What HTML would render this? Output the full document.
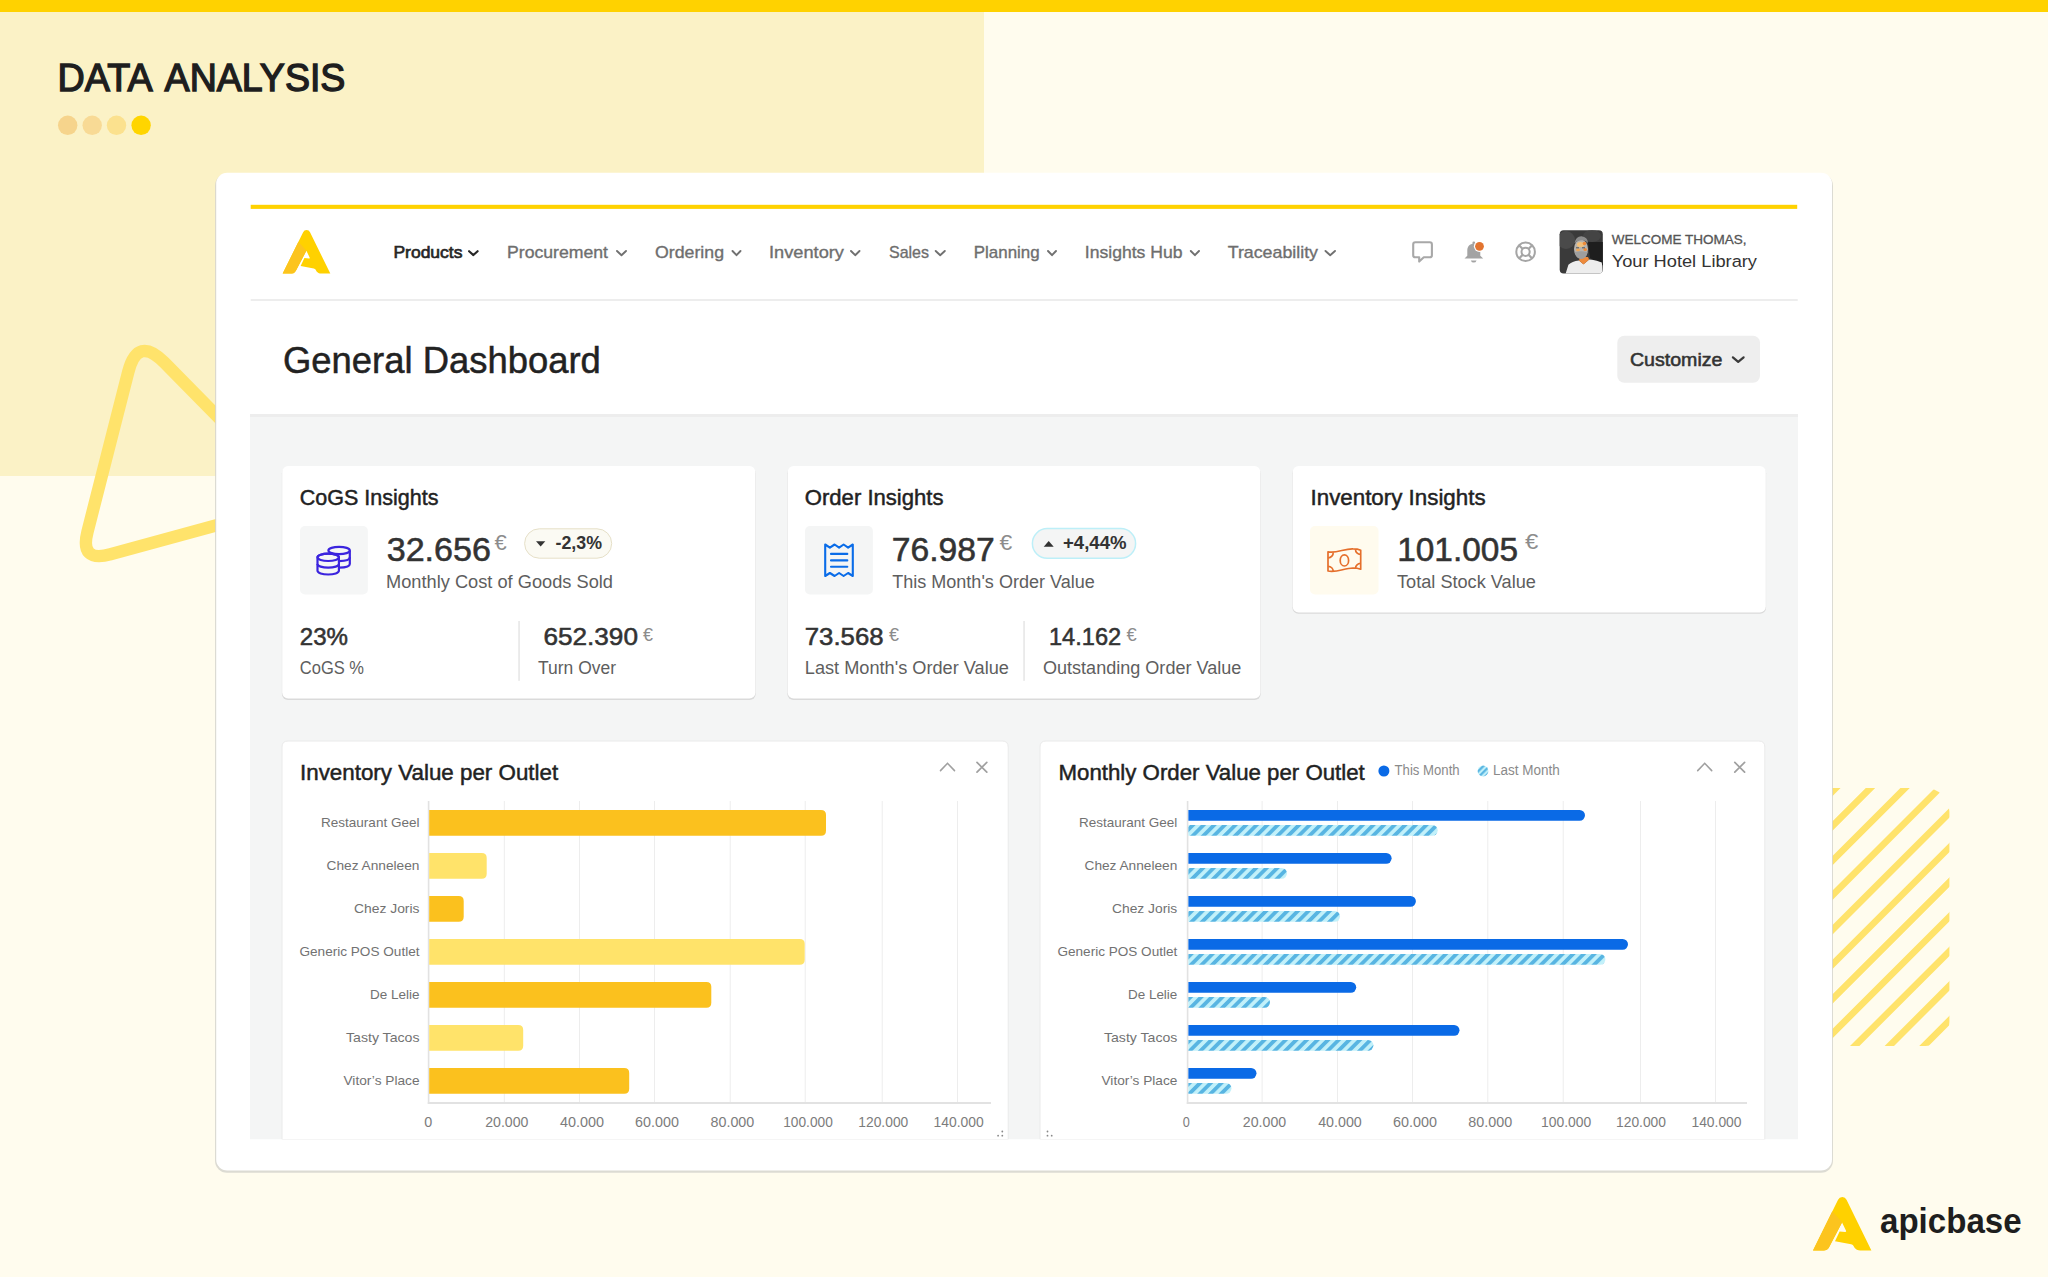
<!DOCTYPE html>
<html><head><meta charset="utf-8"><style>
html,body{margin:0;padding:0;width:2048px;height:1277px;overflow:hidden;background:#FFFCEE}
svg{display:block}
text{font-family:"Liberation Sans",sans-serif}
</style></head><body>
<svg width="2048" height="1277" viewBox="0 0 2048 1277">
<rect x="0" y="0" width="2048" height="1277" fill="#FFFCEE"/>
<rect x="0" y="12" width="984" height="464" fill="#FBF2C6"/>
<rect x="0" y="0" width="2048" height="12" fill="#FFD200"/>
<text x="57.6" y="90.7" font-size="39" fill="#1E1E1E" textLength="95" lengthAdjust="spacingAndGlyphs" stroke="#1E1E1E" stroke-width="1.4">DATA</text>
<text x="164.6" y="90.7" font-size="39" fill="#1E1E1E" textLength="180.8" lengthAdjust="spacingAndGlyphs" stroke="#1E1E1E" stroke-width="1.4">ANALYSIS</text>
<circle cx="67.7" cy="125.3" r="9.7" fill="#F6D48C"/>
<circle cx="92.2" cy="125.3" r="9.7" fill="#F8DA95"/>
<circle cx="116.5" cy="125.3" r="9.7" fill="#FBE18E"/>
<circle cx="141.1" cy="125.3" r="9.7" fill="#FFD500"/>
<path d="M 128.21 372.12 L 87.51 531.69 Q 79.60 562.70 110.47 554.28 L 272.86 509.99 Q 301.80 502.10 280.75 480.72 L 164.26 362.38 Q 137.60 335.30 128.21 372.12 Z" fill="none" stroke="#FFE36B" stroke-width="12.5"/>
<defs><clipPath id="stripeclip"><rect x="1800" y="788" width="149.4" height="258" rx="24"/></clipPath></defs>
<path d="M 1700 780.8000000000002 L 2000 480.8000000000002 L 2000 490.2000000000003 L 1700 790.2000000000003 Z M 1700 815.4000000000001 L 2000 515.4000000000001 L 2000 524.8000000000002 L 1700 824.8000000000002 Z M 1700 850.0 L 2000 550.0 L 2000 559.4000000000001 L 1700 859.4000000000001 Z M 1700 884.5999999999999 L 2000 584.5999999999999 L 2000 594.0 L 1700 894.0 Z M 1700 919.1999999999998 L 2000 619.1999999999998 L 2000 628.5999999999999 L 1700 928.5999999999999 Z M 1700 953.8000000000002 L 2000 653.8000000000002 L 2000 663.2000000000003 L 1700 963.2000000000003 Z M 1700 988.4000000000001 L 2000 688.4000000000001 L 2000 697.8000000000002 L 1700 997.8000000000002 Z M 1700 1023.0 L 2000 723.0 L 2000 732.4000000000001 L 1700 1032.4 Z M 1700 1057.6 L 2000 757.5999999999999 L 2000 767.0 L 1700 1067.0 Z M 1700 1092.1999999999998 L 2000 792.1999999999998 L 2000 801.5999999999999 L 1700 1101.6 Z M 1700 1126.8000000000002 L 2000 826.8000000000002 L 2000 836.2000000000003 L 1700 1136.2000000000003 Z M 1700 1161.4 L 2000 861.4000000000001 L 2000 870.8000000000002 L 1700 1170.8000000000002 Z M 1700 1196.0 L 2000 896.0 L 2000 905.4000000000001 L 1700 1205.4 Z M 1700 1230.6 L 2000 930.5999999999999 L 2000 940.0 L 1700 1240.0 Z M 1700 1265.1999999999998 L 2000 965.1999999999998 L 2000 974.5999999999999 L 1700 1274.6 Z M 1700 1299.8000000000002 L 2000 999.8000000000002 L 2000 1009.2000000000003 L 1700 1309.2000000000003 Z M 1700 1334.4 L 2000 1034.4 L 2000 1043.8000000000002 L 1700 1343.8000000000002 Z M 1700 1369.0 L 2000 1069.0 L 2000 1078.4 L 1700 1378.4 Z M 1700 1403.6 L 2000 1103.6 L 2000 1113.0 L 1700 1413.0 Z M 1700 1438.1999999999998 L 2000 1138.1999999999998 L 2000 1147.6 L 1700 1447.6 Z" fill="#FFE36B" clip-path="url(#stripeclip)"/>
<rect x="215" y="173.8" width="1618" height="999" rx="12" fill="#D6D5CE" opacity="0.85"/>
<rect x="216.2" y="172.8" width="1615.8" height="997.6" rx="11" fill="#FFFFFF"/>
<rect x="250.7" y="204.8" width="1546.5" height="4.1" fill="#FFD200"/>
<rect x="250.7" y="299" width="1547" height="2" fill="#EDEDED"/>
<g transform="translate(278.518 226.017) scale(0.03983)"><path d="M 105 1195 L 618 154 A 96 96 0 0 1 791 154 L 1300 1195 L 1070 1195 C 985 1195 955 1140 935 1105 C 920 1082 905 1073 885 1069 L 555 1005 L 650 805 L 765 815 C 782 815 787 803 781 790 L 700 620 L 450 1100 C 428 1145 400 1195 330 1195 Z" fill="#FFD100"/><path d="M 105 1195 L 500 392 L 700 618 L 450 1100 C 428 1145 400 1195 330 1195 Z" fill="#FCC41E"/></g>
<g transform="translate(1807.869 1192.113) scale(0.04887)"><path d="M 105 1195 L 618 154 A 96 96 0 0 1 791 154 L 1300 1195 L 1070 1195 C 985 1195 955 1140 935 1105 C 920 1082 905 1073 885 1069 L 555 1005 L 650 805 L 765 815 C 782 815 787 803 781 790 L 700 620 L 450 1100 C 428 1145 400 1195 330 1195 Z" fill="#FFD100"/><path d="M 105 1195 L 500 392 L 700 618 L 450 1100 C 428 1145 400 1195 330 1195 Z" fill="#FCC41E"/></g>
<text x="1880" y="1233" font-size="35.5" fill="#1E1E1E" font-weight="700" textLength="141.6" lengthAdjust="spacingAndGlyphs" >apicbase</text>
<text x="393.4" y="258.4" font-size="17" fill="#262626" textLength="69.1" lengthAdjust="spacingAndGlyphs" stroke="#262626" stroke-width="0.65">Products</text>
<polyline points="469.1,251.2 473.4,255.1 477.6,251.2" fill="none" stroke="#262626" stroke-width="2.1" stroke-linecap="round" stroke-linejoin="round"/>
<text x="507" y="258.4" font-size="17" fill="#6E6E6E" textLength="101" lengthAdjust="spacingAndGlyphs" stroke="#6E6E6E" stroke-width="0.35">Procurement</text>
<polyline points="617.0,251.0 621.5,255.2 626.0,251.0" fill="none" stroke="#707070" stroke-width="1.9" stroke-linecap="round" stroke-linejoin="round"/>
<text x="655" y="258.4" font-size="17" fill="#6E6E6E" textLength="69" lengthAdjust="spacingAndGlyphs" stroke="#6E6E6E" stroke-width="0.35">Ordering</text>
<polyline points="732.5,251.0 736.5,255.2 740.5,251.0" fill="none" stroke="#707070" stroke-width="1.9" stroke-linecap="round" stroke-linejoin="round"/>
<text x="769" y="258.4" font-size="17" fill="#6E6E6E" textLength="75" lengthAdjust="spacingAndGlyphs" stroke="#6E6E6E" stroke-width="0.35">Inventory</text>
<polyline points="851.0,251.0 855.2,255.2 859.5,251.0" fill="none" stroke="#707070" stroke-width="1.9" stroke-linecap="round" stroke-linejoin="round"/>
<text x="889" y="258.4" font-size="17" fill="#6E6E6E" textLength="40" lengthAdjust="spacingAndGlyphs" stroke="#6E6E6E" stroke-width="0.35">Sales</text>
<polyline points="935.7,251.0 940.2,255.2 944.8,251.0" fill="none" stroke="#707070" stroke-width="1.9" stroke-linecap="round" stroke-linejoin="round"/>
<text x="973.8" y="258.4" font-size="17" fill="#6E6E6E" textLength="65.9" lengthAdjust="spacingAndGlyphs" stroke="#6E6E6E" stroke-width="0.35">Planning</text>
<polyline points="1048.0,251.0 1052.0,255.2 1056.0,251.0" fill="none" stroke="#707070" stroke-width="1.9" stroke-linecap="round" stroke-linejoin="round"/>
<text x="1084.8" y="258.4" font-size="17" fill="#6E6E6E" textLength="97.7" lengthAdjust="spacingAndGlyphs" stroke="#6E6E6E" stroke-width="0.35">Insights Hub</text>
<polyline points="1190.8,251.0 1194.9,255.2 1199.0,251.0" fill="none" stroke="#707070" stroke-width="1.9" stroke-linecap="round" stroke-linejoin="round"/>
<text x="1227.7" y="258.4" font-size="17" fill="#6E6E6E" textLength="90.3" lengthAdjust="spacingAndGlyphs" stroke="#6E6E6E" stroke-width="0.35">Traceability</text>
<polyline points="1325.5,251.0 1330.2,255.2 1335.0,251.0" fill="none" stroke="#707070" stroke-width="1.9" stroke-linecap="round" stroke-linejoin="round"/>
<path d="M 1415.3 242.3 H 1429.8 Q 1431.9 242.3 1431.9 244.4 V 255.2 Q 1431.9 257.3 1429.8 257.3 H 1423.8 L 1419.2 261.6 V 257.3 H 1415.3 Q 1413.2 257.3 1413.2 255.2 V 244.4 Q 1413.2 242.3 1415.3 242.3 Z" fill="none" stroke="#A8A8A8" stroke-width="2.1" stroke-linejoin="round"/>
<circle cx="1473.8" cy="242.9" r="1.4" fill="#A3A3A3"/>
<path d="M 1467.3 255.8 L 1467.3 250.5 C 1467.3 246.3 1469.8 243.8 1473.8 243.8 C 1477.8 243.8 1480.3 246.3 1480.3 250.5 L 1480.3 255.8 L 1483.2 258.6 L 1464.5 258.6 Z" fill="#A3A3A3"/>
<path d="M 1470.8 260.4 H 1476.6 Q 1475.8 262.6 1473.7 262.6 Q 1471.6 262.6 1470.8 260.4 Z" fill="#A3A3A3"/>
<circle cx="1479.5" cy="246.3" r="5.6" fill="#FFFFFF"/><circle cx="1479.5" cy="246.3" r="4.4" fill="#E27430"/>
<circle cx="1525.6" cy="251.8" r="9.3" fill="none" stroke="#A5A5A5" stroke-width="2"/>
<circle cx="1525.6" cy="251.8" r="4.1" fill="none" stroke="#A5A5A5" stroke-width="2"/>
<path d="M 1528.43 254.63 L 1531.96 258.16 M 1522.77 254.63 L 1519.24 258.16 M 1522.77 248.97 L 1519.24 245.44 M 1528.43 248.97 L 1531.96 245.44" stroke="#A5A5A5" stroke-width="2.2"/>
<defs><clipPath id="avclip"><rect x="1559.7" y="230.3" width="43.1" height="43.3" rx="4"/></clipPath></defs>
<g clip-path="url(#avclip)"><rect x="1559" y="230" width="45" height="45" fill="#3A3A3A"/><ellipse cx="1566" cy="240" rx="9" ry="9" fill="#4A4A4A"/><ellipse cx="1592" cy="236" rx="9" ry="6" fill="#444444"/><path d="M 1588 242 L 1604 242 L 1604 266 L 1590 258 Z" fill="#1E1E1E"/><path d="M 1565.2 275 L 1568.4 264.7 Q 1572 261.5 1579 260.6 L 1583.5 264.3 L 1589.2 259.4 Q 1598 260.5 1601.8 262.6 L 1603 275 Z" fill="#EDEDED"/><path d="M 1579 260.6 L 1583.5 264.5 L 1589.2 259.4 L 1588 257 L 1580 257 Z" fill="#EE8A3C"/><ellipse cx="1581" cy="249" rx="7" ry="9.4" fill="#B9B4AE"/><path d="M 1574.5 243 Q 1576 236 1581.5 236.2 Q 1587.5 236.8 1588.2 243 Q 1585 239.5 1580 240.5 Q 1576.5 241 1574.5 243 Z" fill="#8C8C8C"/><ellipse cx="1580.5" cy="244.5" rx="3.6" ry="2.6" fill="#F3C07A"/><ellipse cx="1584.5" cy="243.5" rx="1.8" ry="1.8" fill="#EE8B3A"/><ellipse cx="1585.2" cy="249.5" rx="1.8" ry="1.6" fill="#EE8B3A"/><ellipse cx="1578" cy="250" rx="2" ry="1.4" fill="#F0A85A"/><rect x="1576" y="247.3" width="3" height="1" fill="#555"/><rect x="1582" y="247.3" width="3" height="1" fill="#555"/><path d="M 1575 252 Q 1581 250.5 1587.5 252 Q 1587 258.5 1581 259 Q 1575.5 258.5 1575 252 Z" fill="#9E9E9E"/></g>
<text x="1611.7" y="244" font-size="12.5" fill="#555555" textLength="134.7" lengthAdjust="spacingAndGlyphs" stroke="#555" stroke-width="0.3">WELCOME THOMAS,</text>
<text x="1611.7" y="266.5" font-size="17.2" fill="#333333" textLength="145.3" lengthAdjust="spacingAndGlyphs" >Your Hotel Library</text>
<text x="283" y="372.7" font-size="36.7" fill="#222222" textLength="317.8" lengthAdjust="spacingAndGlyphs" stroke="#222" stroke-width="0.5">General Dashboard</text>
<rect x="1617.3" y="335.8" width="142.7" height="46.9" rx="7" fill="#EEEEEE"/>
<text x="1629.9" y="366" font-size="18.7" fill="#333333" textLength="92.6" lengthAdjust="spacingAndGlyphs" stroke="#333" stroke-width="0.55">Customize</text>
<polyline points="1732.9,357.3 1738.2,361.9 1743.6,357.3" fill="none" stroke="#3A3A3A" stroke-width="2.2" stroke-linecap="round" stroke-linejoin="round"/>
<rect x="250" y="414" width="1548" height="725.5" fill="#F4F5F5"/>
<rect x="250" y="414" width="1548" height="3" fill="#EDEDED"/>
<rect x="281.9" y="467.3" width="473.8" height="232.6" rx="6" fill="#DADADA"/>
<rect x="282.2" y="466" width="473.2" height="232.6" rx="6" fill="#FFFFFF"/>
<rect x="787.4000000000001" y="467.3" width="473.3" height="232.6" rx="6" fill="#DADADA"/>
<rect x="787.7" y="466" width="472.7" height="232.6" rx="6" fill="#FFFFFF"/>
<rect x="1292.4" y="467.3" width="473.70000000000005" height="146.5" rx="6" fill="#DADADA"/>
<rect x="1292.7" y="466" width="473.1" height="146.5" rx="6" fill="#FFFFFF"/>
<text x="299.8" y="504.6" font-size="21.5" fill="#222222" textLength="138.7" lengthAdjust="spacingAndGlyphs" stroke="#222" stroke-width="0.45">CoGS Insights</text>
<rect x="300" y="526" width="67.9" height="68.5" rx="5" fill="#F5F6F6"/>
<text x="386.7" y="560.5" font-size="33" fill="#333333" textLength="104.3" lengthAdjust="spacingAndGlyphs" stroke="#333" stroke-width="0.55">32.656</text>
<text x="494.6" y="550.2" font-size="22" fill="#8C8C8C" textLength="12.2" lengthAdjust="spacingAndGlyphs" >€</text>
<rect x="524.6" y="528.8" width="87.1" height="29.4" rx="14.7" fill="#FBFAF3" stroke="#E6E0C8" stroke-width="1"/>
<path d="M 536 541.2 L 545.3 541.2 L 540.65 546.5 Z" fill="#333"/>
<text x="555.5" y="549" font-size="18" fill="#333333" font-weight="700" textLength="46.5" lengthAdjust="spacingAndGlyphs" >-2,3%</text>
<text x="386" y="588" font-size="18" fill="#5E5E5E" textLength="227" lengthAdjust="spacingAndGlyphs" >Monthly Cost of Goods Sold</text>
<text x="299.8" y="644.7" font-size="24.7" fill="#333333" textLength="48.2" lengthAdjust="spacingAndGlyphs" stroke="#333" stroke-width="0.55">23%</text>
<text x="299.8" y="673.5" font-size="17.5" fill="#5E5E5E" textLength="64.2" lengthAdjust="spacingAndGlyphs" >CoGS %</text>
<rect x="518.3" y="621" width="1.5" height="59.8" fill="#E5E5E5"/>
<text x="543.4" y="644.7" font-size="24.7" fill="#333333" textLength="94.6" lengthAdjust="spacingAndGlyphs" stroke="#333" stroke-width="0.55">652.390</text>
<text x="643" y="640.5" font-size="18" fill="#8C8C8C" textLength="10" lengthAdjust="spacingAndGlyphs" >€</text>
<text x="538" y="673.5" font-size="17.5" fill="#5E5E5E" textLength="78" lengthAdjust="spacingAndGlyphs" >Turn Over</text>
<g fill="none" stroke="#3B24DE" stroke-width="2.2"><ellipse cx="339.1" cy="550.5" rx="10.7" ry="3.7"/><path d="M 349.8 550.5 V 564 Q 349.8 567.5 339.1 567.7"/><path d="M 349.8 557.3 Q 349.8 561 339.1 561.2"/><path d="M 317.5 557.3 A 10.7 3.7 0 0 1 338.9 557.3 V 570.8 A 10.7 3.7 0 0 1 317.5 570.8 Z" fill="#F5F6F6"/><ellipse cx="328.2" cy="557.3" rx="10.7" ry="3.7"/><path d="M 317.5 564 A 10.7 3.7 0 0 0 338.9 564"/></g>
<text x="804.8" y="504.6" font-size="21.5" fill="#222222" textLength="138.7" lengthAdjust="spacingAndGlyphs" stroke="#222" stroke-width="0.45">Order Insights</text>
<rect x="805" y="526" width="67.9" height="68.5" rx="5" fill="#F4F5F5"/>
<text x="891.7" y="560.5" font-size="33" fill="#333333" textLength="103" lengthAdjust="spacingAndGlyphs" stroke="#333" stroke-width="0.55">76.987</text>
<text x="999.6" y="550.2" font-size="22" fill="#8C8C8C" textLength="12.7" lengthAdjust="spacingAndGlyphs" >€</text>
<rect x="1032.4" y="528.6" width="103.2" height="29.7" rx="14.85" fill="#F4F5F5" stroke="#BDEFF8" stroke-width="1.5"/>
<path d="M 1043.7 546.7 L 1053.7 546.7 L 1048.7 541.1 Z" fill="#333"/>
<text x="1063" y="548.7" font-size="18" fill="#333333" font-weight="700" textLength="63.6" lengthAdjust="spacingAndGlyphs" >+4,44%</text>
<text x="892.2" y="588" font-size="18" fill="#5E5E5E" textLength="202.6" lengthAdjust="spacingAndGlyphs" >This Month's Order Value</text>
<text x="804.8" y="644.7" font-size="24.7" fill="#333333" textLength="78.8" lengthAdjust="spacingAndGlyphs" stroke="#333" stroke-width="0.55">73.568</text>
<text x="889" y="640.5" font-size="18" fill="#8C8C8C" textLength="10" lengthAdjust="spacingAndGlyphs" >€</text>
<text x="804.8" y="673.5" font-size="17.5" fill="#5E5E5E" textLength="204.1" lengthAdjust="spacingAndGlyphs" >Last Month's Order Value</text>
<rect x="1023.3" y="621" width="1.5" height="59.8" fill="#E5E5E5"/>
<text x="1048.9" y="644.7" font-size="24.7" fill="#333333" textLength="72.3" lengthAdjust="spacingAndGlyphs" stroke="#333" stroke-width="0.55">14.162</text>
<text x="1126.6" y="640.5" font-size="18" fill="#8C8C8C" textLength="10.2" lengthAdjust="spacingAndGlyphs" >€</text>
<text x="1043" y="673.5" font-size="17.5" fill="#5E5E5E" textLength="198.3" lengthAdjust="spacingAndGlyphs" >Outstanding Order Value</text>
<g fill="none" stroke="#0A6CE8" stroke-width="2.1" stroke-linejoin="round" stroke-linecap="round"><path d="M 825.2 544.5 L 829.9 547.6 L 834.6 544.5 L 839.1 547.6 L 843.6 544.5 L 848.1 547.6 L 852.8 544.5 V 576 L 848.1 573 L 843.6 576 L 839.1 573 L 834.6 576 L 829.9 573 L 825.2 576 Z"/><path d="M 831 553.9 H 847.3 M 831 560.4 H 847.3 M 831 566.8 H 847.3"/></g>
<text x="1310.5" y="504.6" font-size="21.5" fill="#222222" textLength="175.1" lengthAdjust="spacingAndGlyphs" stroke="#222" stroke-width="0.45">Inventory Insights</text>
<rect x="1310" y="526" width="68.5" height="68.5" rx="5" fill="#FFFBEE"/>
<text x="1397.2" y="560.5" font-size="33" fill="#333333" textLength="120.8" lengthAdjust="spacingAndGlyphs" stroke="#333" stroke-width="0.55">101.005</text>
<text x="1525" y="549" font-size="22" fill="#8C8C8C" textLength="13.3" lengthAdjust="spacingAndGlyphs" >€</text>
<text x="1397" y="588" font-size="18" fill="#5E5E5E" textLength="138.9" lengthAdjust="spacingAndGlyphs" >Total Stock Value</text>
<g fill="none" stroke="#E56F2C" stroke-width="1.7" stroke-linejoin="round"><path d="M 1328 551.8 C 1337 553.5 1344 548.5 1353 548.8 C 1356 548.8 1358.5 549.2 1360.7 550.2 V 569.2 C 1358.5 568.4 1356 568 1353 568 C 1344 568.2 1337 572.8 1328 571 Z"/><ellipse cx="1344.4" cy="560.4" rx="4.2" ry="5.6"/><path d="M 1328.2 557.8 A 5 5 0 0 0 1333.2 552.4"/><path d="M 1355.5 549.2 A 5 5 0 0 0 1360.6 554.4"/><path d="M 1328.2 566.3 A 5 5 0 0 1 1333.2 571.3"/><path d="M 1355.5 568.3 A 5 5 0 0 1 1360.6 563.4"/></g>
<defs><pattern id="hatch" patternUnits="userSpaceOnUse" width="7.5" height="7.5" patternTransform="rotate(45)"><rect width="7.5" height="7.5" fill="#C2F1FA"/><rect width="3.8" height="7.5" fill="#58B5E2"/></pattern><pattern id="hatch2" patternUnits="userSpaceOnUse" width="4.3" height="4.3" patternTransform="translate(1483 771) rotate(45)"><rect width="4.3" height="4.3" fill="#C2F1FA"/><rect width="2.2" height="4.3" fill="#58B5E2"/></pattern></defs>
<path d="M 282 1139.5 V 747 Q 282 741 288 741 H 1002.2 Q 1008.2 741 1008.2 747 V 1139.5 Z" fill="#FFFFFF" stroke="#EAEAEA" stroke-width="1"/>
<path d="M 1040 1139.5 V 747 Q 1040 741 1046 741 H 1758.8 Q 1764.8 741 1764.8 747 V 1139.5 Z" fill="#FFFFFF" stroke="#EAEAEA" stroke-width="1"/>
<rect x="250" y="1139.5" width="1548" height="30" fill="#FFFFFF"/>
<text x="300" y="780.1" font-size="21.5" fill="#222222" textLength="258.2" lengthAdjust="spacingAndGlyphs" stroke="#222" stroke-width="0.45">Inventory Value per Outlet</text>
<polyline points="940.5,770.6 947.5,763.3 954.5,770.6" fill="none" stroke="#A0A0A0" stroke-width="1.6" stroke-linecap="round"/>
<path d="M 977 762.4 L 986.8 772.2 M 986.8 762.4 L 977 772.2" stroke="#A0A0A0" stroke-width="1.7" stroke-linecap="round"/>
<rect x="503.8" y="801" width="1" height="302" fill="#EDEDED"/>
<rect x="579.0" y="801" width="1" height="302" fill="#EDEDED"/>
<rect x="654.0" y="801" width="1" height="302" fill="#EDEDED"/>
<rect x="729.7" y="801" width="1" height="302" fill="#EDEDED"/>
<rect x="804.7" y="801" width="1" height="302" fill="#EDEDED"/>
<rect x="881.7" y="801" width="1" height="302" fill="#EDEDED"/>
<rect x="957.0" y="801" width="1" height="302" fill="#EDEDED"/>
<rect x="427.8" y="801" width="1.6" height="303" fill="#E2E2E2"/>
<rect x="427.8" y="1102" width="563.2" height="2" fill="#E2E2E2"/>
<path d="M 429.2 810 H 821 Q 826 810 826 815 V 830.7 Q 826 835.7 821 835.7 H 429.2 Z" fill="#FBC11E"/>
<path d="M 429.2 853 H 481.7 Q 486.7 853 486.7 858 V 873.7 Q 486.7 878.7 481.7 878.7 H 429.2 Z" fill="#FFE36A"/>
<path d="M 429.2 896 H 458.7 Q 463.7 896 463.7 901 V 916.7 Q 463.7 921.7 458.7 921.7 H 429.2 Z" fill="#FBC11E"/>
<path d="M 429.2 939 H 799.7 Q 804.7 939 804.7 944 V 959.7 Q 804.7 964.7 799.7 964.7 H 429.2 Z" fill="#FFE36A"/>
<path d="M 429.2 982 H 706.3 Q 711.3 982 711.3 987 V 1002.7 Q 711.3 1007.7 706.3 1007.7 H 429.2 Z" fill="#FBC11E"/>
<path d="M 429.2 1025 H 518.2 Q 523.2 1025 523.2 1030 V 1045.7 Q 523.2 1050.7 518.2 1050.7 H 429.2 Z" fill="#FFE36A"/>
<path d="M 429.2 1068 H 624.2 Q 629.2 1068 629.2 1073 V 1088.7 Q 629.2 1093.7 624.2 1093.7 H 429.2 Z" fill="#FBC11E"/>
<text x="419.5" y="826.5" font-size="13" fill="#727272" text-anchor="end" textLength="98.5" lengthAdjust="spacingAndGlyphs" >Restaurant Geel</text>
<text x="419.5" y="869.5" font-size="13" fill="#727272" text-anchor="end" textLength="93" lengthAdjust="spacingAndGlyphs" >Chez Anneleen</text>
<text x="419.5" y="912.5" font-size="13" fill="#727272" text-anchor="end" textLength="65.5" lengthAdjust="spacingAndGlyphs" >Chez Joris</text>
<text x="419.5" y="955.5" font-size="13" fill="#727272" text-anchor="end" textLength="120" lengthAdjust="spacingAndGlyphs" >Generic POS Outlet</text>
<text x="419.5" y="998.5" font-size="13" fill="#727272" text-anchor="end" textLength="49.5" lengthAdjust="spacingAndGlyphs" >De Lelie</text>
<text x="419.5" y="1041.5" font-size="13" fill="#727272" text-anchor="end" textLength="73.5" lengthAdjust="spacingAndGlyphs" >Tasty Tacos</text>
<text x="419.5" y="1084.5" font-size="13" fill="#727272" text-anchor="end" textLength="76" lengthAdjust="spacingAndGlyphs" >Vitor’s Place</text>
<text x="428.2" y="1126.6" font-size="14" fill="#7C7C7C" text-anchor="middle" textLength="8" lengthAdjust="spacingAndGlyphs" >0</text>
<text x="506.8" y="1126.6" font-size="14" fill="#7C7C7C" text-anchor="middle" textLength="43.2" lengthAdjust="spacingAndGlyphs" >20.000</text>
<text x="582" y="1126.6" font-size="14" fill="#7C7C7C" text-anchor="middle" textLength="44.1" lengthAdjust="spacingAndGlyphs" >40.000</text>
<text x="657" y="1126.6" font-size="14" fill="#7C7C7C" text-anchor="middle" textLength="43.8" lengthAdjust="spacingAndGlyphs" >60.000</text>
<text x="732.4" y="1126.6" font-size="14" fill="#7C7C7C" text-anchor="middle" textLength="43.8" lengthAdjust="spacingAndGlyphs" >80.000</text>
<text x="808" y="1126.6" font-size="14" fill="#7C7C7C" text-anchor="middle" textLength="49.5" lengthAdjust="spacingAndGlyphs" >100.000</text>
<text x="883.3" y="1126.6" font-size="14" fill="#7C7C7C" text-anchor="middle" textLength="49.9" lengthAdjust="spacingAndGlyphs" >120.000</text>
<text x="958.7" y="1126.6" font-size="14" fill="#7C7C7C" text-anchor="middle" textLength="50.2" lengthAdjust="spacingAndGlyphs" >140.000</text>
<text x="1058.5" y="780" font-size="21.5" fill="#222222" textLength="306.3" lengthAdjust="spacingAndGlyphs" stroke="#222" stroke-width="0.45">Monthly Order Value per Outlet</text>
<circle cx="1383.9" cy="771" r="5.5" fill="#0A6AE6"/>
<text x="1394.6" y="775.4" font-size="13.8" fill="#8A8A8A" textLength="65" lengthAdjust="spacingAndGlyphs" >This Month</text>
<circle cx="1483" cy="771" r="5.4" fill="url(#hatch2)"/>
<text x="1493" y="775.4" font-size="13.8" fill="#8A8A8A" textLength="66.7" lengthAdjust="spacingAndGlyphs" >Last Month</text>
<polyline points="1697.7,770.6 1704.7,763.3 1711.7,770.6" fill="none" stroke="#A0A0A0" stroke-width="1.6" stroke-linecap="round"/>
<path d="M 1734.8 762.4 L 1744.6 772.2 M 1744.6 762.4 L 1734.8 772.2" stroke="#A0A0A0" stroke-width="1.7" stroke-linecap="round"/>
<rect x="1261.6" y="801" width="1" height="302" fill="#EDEDED"/>
<rect x="1337.0" y="801" width="1" height="302" fill="#EDEDED"/>
<rect x="1412.0" y="801" width="1" height="302" fill="#EDEDED"/>
<rect x="1487.3" y="801" width="1" height="302" fill="#EDEDED"/>
<rect x="1562.7" y="801" width="1" height="302" fill="#EDEDED"/>
<rect x="1640.0" y="801" width="1" height="302" fill="#EDEDED"/>
<rect x="1715.0" y="801" width="1" height="302" fill="#EDEDED"/>
<rect x="1186.8" y="801" width="1.6" height="303" fill="#E2E2E2"/>
<rect x="1186.8" y="1102" width="560.2" height="2" fill="#E2E2E2"/>
<path d="M 1188.4 810 H 1579.65 A 5.35 5.35 0 0 1 1579.65 820.7 H 1188.4 Z" fill="#0A6AE6"/>
<path d="M 1188.4 825 H 1432.35 A 5.35 5.35 0 0 1 1432.35 835.7 H 1188.4 Z" fill="url(#hatch)"/>
<path d="M 1188.4 853 H 1386.25 A 5.35 5.35 0 0 1 1386.25 863.7 H 1188.4 Z" fill="#0A6AE6"/>
<path d="M 1188.4 868 H 1281.65 A 5.35 5.35 0 0 1 1281.65 878.7 H 1188.4 Z" fill="url(#hatch)"/>
<path d="M 1188.4 896 H 1410.55 A 5.35 5.35 0 0 1 1410.55 906.7 H 1188.4 Z" fill="#0A6AE6"/>
<path d="M 1188.4 911 H 1334.65 A 5.35 5.35 0 0 1 1334.65 921.7 H 1188.4 Z" fill="url(#hatch)"/>
<path d="M 1188.4 939 H 1622.65 A 5.35 5.35 0 0 1 1622.65 949.7 H 1188.4 Z" fill="#0A6AE6"/>
<path d="M 1188.4 954 H 1600.05 A 5.35 5.35 0 0 1 1600.05 964.7 H 1188.4 Z" fill="url(#hatch)"/>
<path d="M 1188.4 982 H 1350.85 A 5.35 5.35 0 0 1 1350.85 992.7 H 1188.4 Z" fill="#0A6AE6"/>
<path d="M 1188.4 997 H 1264.65 A 5.35 5.35 0 0 1 1264.65 1007.7 H 1188.4 Z" fill="url(#hatch)"/>
<path d="M 1188.4 1025 H 1454.15 A 5.35 5.35 0 0 1 1454.15 1035.7 H 1188.4 Z" fill="#0A6AE6"/>
<path d="M 1188.4 1040 H 1368.05 A 5.35 5.35 0 0 1 1368.05 1050.7 H 1188.4 Z" fill="url(#hatch)"/>
<path d="M 1188.4 1068 H 1251.15 A 5.35 5.35 0 0 1 1251.15 1078.7 H 1188.4 Z" fill="#0A6AE6"/>
<path d="M 1188.4 1083 H 1226.15 A 5.35 5.35 0 0 1 1226.15 1093.7 H 1188.4 Z" fill="url(#hatch)"/>
<text x="1177.3" y="826.5" font-size="13" fill="#727272" text-anchor="end" textLength="98.3" lengthAdjust="spacingAndGlyphs" >Restaurant Geel</text>
<text x="1177.3" y="869.5" font-size="13" fill="#727272" text-anchor="end" textLength="92.8" lengthAdjust="spacingAndGlyphs" >Chez Anneleen</text>
<text x="1177.3" y="912.5" font-size="13" fill="#727272" text-anchor="end" textLength="65.3" lengthAdjust="spacingAndGlyphs" >Chez Joris</text>
<text x="1177.3" y="955.5" font-size="13" fill="#727272" text-anchor="end" textLength="119.8" lengthAdjust="spacingAndGlyphs" >Generic POS Outlet</text>
<text x="1177.3" y="998.5" font-size="13" fill="#727272" text-anchor="end" textLength="49.3" lengthAdjust="spacingAndGlyphs" >De Lelie</text>
<text x="1177.3" y="1041.5" font-size="13" fill="#727272" text-anchor="end" textLength="73.3" lengthAdjust="spacingAndGlyphs" >Tasty Tacos</text>
<text x="1177.3" y="1084.5" font-size="13" fill="#727272" text-anchor="end" textLength="75.8" lengthAdjust="spacingAndGlyphs" >Vitor’s Place</text>
<text x="1186.4" y="1126.6" font-size="14" fill="#7C7C7C" text-anchor="middle" textLength="7.1" lengthAdjust="spacingAndGlyphs" >0</text>
<text x="1264.5" y="1126.6" font-size="14" fill="#7C7C7C" text-anchor="middle" textLength="43.3" lengthAdjust="spacingAndGlyphs" >20.000</text>
<text x="1340" y="1126.6" font-size="14" fill="#7C7C7C" text-anchor="middle" textLength="43.6" lengthAdjust="spacingAndGlyphs" >40.000</text>
<text x="1415" y="1126.6" font-size="14" fill="#7C7C7C" text-anchor="middle" textLength="43.9" lengthAdjust="spacingAndGlyphs" >60.000</text>
<text x="1490.2" y="1126.6" font-size="14" fill="#7C7C7C" text-anchor="middle" textLength="43.9" lengthAdjust="spacingAndGlyphs" >80.000</text>
<text x="1566.1" y="1126.6" font-size="14" fill="#7C7C7C" text-anchor="middle" textLength="50.2" lengthAdjust="spacingAndGlyphs" >100.000</text>
<text x="1641" y="1126.6" font-size="14" fill="#7C7C7C" text-anchor="middle" textLength="49.9" lengthAdjust="spacingAndGlyphs" >120.000</text>
<text x="1716.5" y="1126.6" font-size="14" fill="#7C7C7C" text-anchor="middle" textLength="50.1" lengthAdjust="spacingAndGlyphs" >140.000</text>
<circle cx="1002.3" cy="1131.5" r="0.9" fill="#888"/>
<circle cx="998.1" cy="1135.7" r="0.9" fill="#888"/>
<circle cx="1002.3" cy="1135.7" r="0.9" fill="#888"/>
<circle cx="1047.5" cy="1131.5" r="0.9" fill="#888"/>
<circle cx="1047.5" cy="1135.7" r="0.9" fill="#888"/>
<circle cx="1051.7" cy="1135.7" r="0.9" fill="#888"/>
</svg></body></html>
